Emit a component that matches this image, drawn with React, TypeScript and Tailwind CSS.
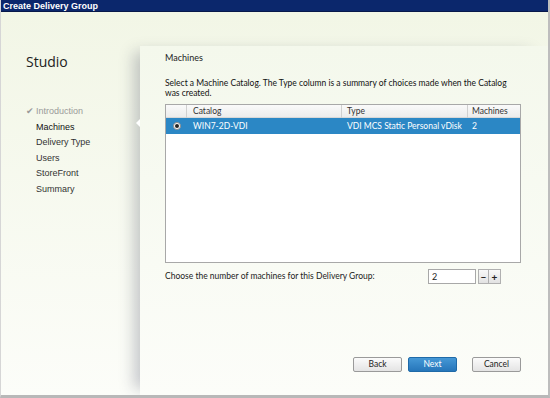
import React from "react";

const navFont = { fontFamily: '"Liberation Sans", Arial, sans-serif' };

export default function App() {
  const steps = ["Machines", "Delivery Type", "Users", "StoreFront", "Summary"];
  return (
    <div
      className="w-[550px] h-[398px] flex flex-col overflow-hidden border-l border-l-[#d6d6d6] border-r-2 border-r-[#bdbdbd] border-b-[3px] border-b-[#b8b8b8] bg-white"
      style={{ fontFamily: '"Lato", "Liberation Sans", sans-serif' }}
    >
      <div
        className="h-[12px] shrink-0 bg-[#0b276c] text-white font-bold text-[9px] leading-[12px] pl-[2px] border-b border-b-[#07184a] whitespace-nowrap"
        style={navFont}
      >
        Create Delivery Group
      </div>
      <div className="flex-1 flex bg-gradient-to-b from-[#f2f6e6] to-[#fcfdf9]">
        <div className="w-[139px] shrink-0 flex flex-col">
          <div className="pl-[25px] pt-[40px] text-[14px] leading-[20px] text-[#222]" style={{ fontFamily: '"Open Sans", sans-serif' }}>
            Studio
          </div>
          <div className="mt-[32px] flex flex-col text-[9px] leading-[15.6px]" style={navFont}>
            <div className="flex items-center text-[#9a9a9a]">
              <span className="w-[10px] pl-[25px] box-content text-[9px]">✔</span>
              <span>Introduction</span>
            </div>
            {steps.map((s, i) => (
              <div key={s} className={"pl-[35px] " + (i === 0 ? "text-[#111]" : "text-[#333]")}>
                {s}
              </div>
            ))}
          </div>
        </div>
        <div className="flex-1 mt-[34px] relative bg-gradient-to-b from-[#f4f8ec] to-[#fcfdf9] shadow-[-12px_0_14px_-6px_rgba(40,45,70,0.25)] pl-[25px] pr-[25px] flex flex-col">
          <div className="absolute left-[-4px] top-[73px] w-0 h-0 border-y-[4px] border-y-transparent border-r-[4px] border-r-white" />
          <div className="pt-[6px] text-[9px] leading-[12px] text-[#222]">Machines</div>
          <div className="mt-[14px] text-[8.5px] leading-[10px] text-[#111] w-[346px]">
            Select a Machine Catalog. The Type column is a summary of choices made when the Catalog was created.
          </div>
          <div className="mt-[6px] w-[356px] h-[159px] border border-[#a8a8a8] bg-white flex flex-col">
            <div className="grid grid-cols-[21px_155px_126px_52px] h-[13px] bg-gradient-to-b from-[#fafafa] to-[#ececec] border-b border-b-[#d8d8d8] text-[8.5px] leading-[13px] text-[#333] whitespace-nowrap">
              <div className="border-r border-r-[#d0d0d0]" />
              <div className="border-r border-r-[#d0d0d0] pl-[6px]">Catalog</div>
              <div className="border-r border-r-[#d0d0d0] pl-[5px]">Type</div>
              <div className="pl-[4px]">Machines</div>
            </div>
            <div className="grid grid-cols-[21px_155px_126px_52px] h-[16px] bg-[#2b87c5] text-white text-[8.5px] leading-[16px] whitespace-nowrap">
              <div className="flex items-center justify-center pl-[1px]">
                <div className="w-[8px] h-[8px] rounded-full bg-white border border-[#8a8a8a] flex items-center justify-center">
                  <div className="w-[4px] h-[4px] rounded-full bg-[#222]" />
                </div>
              </div>
              <div className="pl-[6px]">WIN7-2D-VDI</div>
              <div className="pl-[5px]">VDI MCS Static Personal vDisk</div>
              <div className="pl-[4px]">2</div>
            </div>
          </div>
          <div className="mt-[6px] flex items-center h-[15px] text-[8.5px] text-[#222] whitespace-nowrap">
            <div className="w-[263px]">Choose the number of machines for this Delivery Group:</div>
            <div className="w-[48px] h-[15px] border border-[#a8a8a8] bg-white text-[9px] leading-[13px] pl-[3px]">2</div>
            <div className="ml-[2px] flex h-[15px]">
              <div className="w-[11px] h-[15px] border border-[#b0b0b0] bg-gradient-to-b from-[#f8f8f8] to-[#e2e2e2] flex items-center justify-center text-[10px] font-bold leading-none">−</div>
              <div className="w-[12px] h-[15px] border border-l-0 border-[#b0b0b0] bg-gradient-to-b from-[#f8f8f8] to-[#e2e2e2] flex items-center justify-center text-[10px] font-bold leading-none">+</div>
            </div>
          </div>
          <div className="mt-[73px] flex justify-end w-[356px] text-[8.5px]">
            <div className="w-[49px] h-[15px] border border-[#9a9a9a] rounded-[2px] bg-gradient-to-b from-[#fbfbfb] to-[#e4e4e4] flex items-center justify-center text-[#222]">Back</div>
            <div className="ml-[6px] w-[49px] h-[15px] border border-[#1f6aa8] rounded-[2px] bg-gradient-to-b from-[#4598d6] to-[#2676ba] flex items-center justify-center text-white">Next</div>
            <div className="ml-[15px] w-[49px] h-[15px] border border-[#9a9a9a] rounded-[2px] bg-gradient-to-b from-[#fbfbfb] to-[#e4e4e4] flex items-center justify-center text-[#222]">Cancel</div>
          </div>
        </div>
      </div>
    </div>
  );
}
